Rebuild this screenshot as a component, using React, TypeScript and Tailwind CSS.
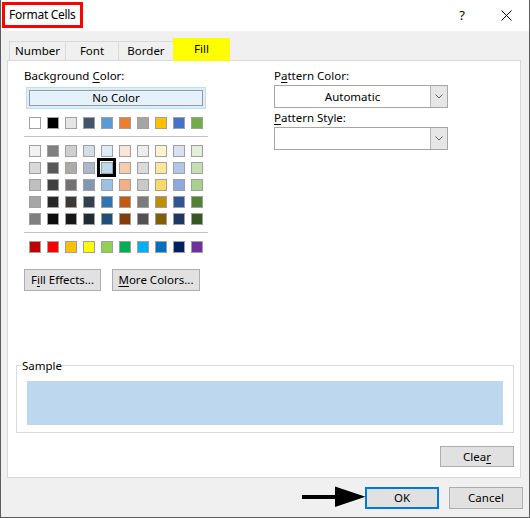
import React from "react";

const firstRow = ["#FFFFFF","#000000","#E7E6E6","#44546A","#5B9BD5","#ED7D31","#A5A5A5","#FFC000","#4472C4","#70AD47"];
const tints = [
  ["#F2F2F2","#7F7F7F","#D0CECE","#D6DCE4","#DDEBF7","#FCE4D6","#EDEDED","#FFF2CC","#D9E1F2","#E2EFDA"],
  ["#D9D9D9","#595959","#AEAAAA","#ADB9CA","#BDD7EE","#F8CBAD","#DBDBDB","#FFE699","#B4C6E7","#C6E0B4"],
  ["#BFBFBF","#404040","#767171","#8497B0","#9BC2E6","#F4B084","#C9C9C9","#FFD966","#8EA9DB","#A9D08E"],
  ["#A6A6A6","#262626","#3B3838","#333F4F","#2F75B5","#C65911","#7B7B7B","#BF8F00","#305496","#548235"],
  ["#808080","#0D0D0D","#181717","#222A35","#1F4E78","#833C0C","#525252","#806000","#203764","#375623"],
];
const standard = ["#C00000","#FF0000","#FFC000","#FFFF00","#92D050","#00B050","#00B0F0","#0070C0","#002060","#7030A0"];

function Swatch({ color, selected }: { color: string; selected?: boolean }) {
  return (
    <div className="relative w-[12px] h-[12px] shrink-0 border border-[#a0a0a0]" style={{ backgroundColor: color }}>
      {selected && (
        <div className="absolute left-[-5px] top-[-5px] w-[19px] h-[19px] border-[3px] border-black" />
      )}
    </div>
  );
}

function SwatchRow({ colors, sel }: { colors: string[]; sel?: number }) {
  return (
    <div className="flex gap-[6px] pl-[5px]">
      {colors.map((c, i) => (
        <Swatch key={i} color={c} selected={sel === i} />
      ))}
    </div>
  );
}

function Dropdown({ value }: { value?: string }) {
  return (
    <div className="flex h-[23px] w-[174px] border border-[#a6a6a6] bg-white">
      <div className="flex-1 flex items-center justify-center text-[11.5px] leading-[16px]">{value}</div>
      <div className="w-[17px] bg-[#e6e6e6] border-l border-[#b4b4b4] flex items-center justify-center">
        <svg width="8" height="5" viewBox="0 0 8 5">
          <path d="M0.5 0.5 L4 4 L7.5 0.5" fill="none" stroke="#606060" strokeWidth="1" />
        </svg>
      </div>
    </div>
  );
}

function Btn({ children, className }: { children: React.ReactNode; className: string }) {
  return (
    <div className={"flex items-center justify-center bg-[#e1e1e1] text-[11.5px] leading-[16px] " + className}>
      {children}
    </div>
  );
}

export default function App() {
  return (
    <div className="relative w-[530px] h-[518px] overflow-hidden bg-[#f0f0f0] border-l border-r border-b border-[#5c5c5c] flex flex-col font-['Noto_Sans','Segoe_UI',sans-serif] text-black">
      {/* Title bar */}
      <div className="h-[31px] shrink-0 bg-white flex items-start pt-[2px] pl-[1px]">
        <div className="w-[81px] h-[26px] border-[3px] border-[#ff0000] flex items-center pl-[4px] text-[12px] tracking-[-0.3px] leading-[16px] whitespace-nowrap">
          Format Cells
        </div>
        <div className="ml-auto flex items-center h-[26px] mr-[17px]">
          <span className="text-[13px] leading-[16px]">?</span>
          <svg className="ml-[36px]" width="11" height="11" viewBox="0 0 11 11">
            <path d="M0.5 0.5 L10.5 10.5 M10.5 0.5 L0.5 10.5" stroke="#000" strokeWidth="1" fill="none" />
          </svg>
        </div>
      </div>

      {/* Tabs */}
      <div className="h-[29px] shrink-0 flex items-end pl-[8px] relative z-10">
        <div className="w-[57px] h-[19px] border border-b-0 border-[#d9d9d9] flex items-center justify-center text-[11.5px] leading-[16px]">Number</div>
        <div className="w-[54px] h-[19px] -ml-px border border-b-0 border-[#d9d9d9] flex items-center justify-center text-[11.5px] leading-[16px]">Font</div>
        <div className="w-[56px] h-[19px] -ml-px border border-b-0 border-[#d9d9d9] flex items-center justify-center text-[11.5px] leading-[16px]">Border</div>
        <div className="w-[57px] h-[23px] -ml-px -mb-px bg-[#ffff00] flex items-center justify-center text-[11.5px] leading-[16px] pb-[1px]">Fill</div>
      </div>

      {/* Panel */}
      <div className="ml-[6px] w-[514px] h-[418px] shrink-0 bg-white border border-[#d9d9d9] flex flex-col pt-[7px]">
        <div className="flex pl-[16px]">
          {/* Left column */}
          <div className="w-[184px] flex flex-col">
            <div className="text-[11.5px] leading-[16px] whitespace-nowrap">
              Background <span className="underline underline-offset-2">C</span>olor:
            </div>
            <div className="mt-[3px] ml-[2px] w-[180px] h-[22px] border border-[#c3ddf4] bg-[#dcecfa] p-[2px]">
              <div className="w-full h-full border border-[#9a9a9a] bg-[#e5f1fb] flex items-center justify-center text-[11.5px] leading-[16px]">
                No Color
              </div>
            </div>
            <div className="mt-[8px]">
              <SwatchRow colors={firstRow} />
            </div>
            <div className="mt-[7px] h-px w-[184px] bg-[#c4c4c4]" />
            <div className="mt-[8px] flex flex-col gap-[5px]">
              {tints.map((row, i) => (
                <SwatchRow key={i} colors={row} sel={i === 1 ? 4 : undefined} />
              ))}
            </div>
            <div className="mt-[7px] h-px w-[184px] bg-[#c4c4c4]" />
            <div className="mt-[8px]">
              <SwatchRow colors={standard} />
            </div>
            <div className="mt-[16px] flex gap-[11px]">
              <Btn className="w-[77px] h-[22px] border border-[#adadad]">
                <span>F<span className="underline underline-offset-2">i</span>ll Effects...</span>
              </Btn>
              <Btn className="w-[88px] h-[22px] border border-[#adadad]">
                <span><span className="underline underline-offset-2">M</span>ore Colors...</span>
              </Btn>
            </div>
          </div>

          {/* Right column */}
          <div className="ml-[66px] flex flex-col">
            <div className="text-[11.5px] leading-[16px] whitespace-nowrap">
              P<span className="underline underline-offset-2">a</span>ttern Color:
            </div>
            <div className="mt-[1px]">
              <Dropdown value="Automatic" />
            </div>
            <div className="mt-[2px] text-[11.5px] leading-[16px] whitespace-nowrap">
              <span className="underline underline-offset-2">P</span>attern Style:
            </div>
            <div className="mt-[1px]">
              <Dropdown />
            </div>
          </div>
        </div>

        {/* Sample */}
        <div className="relative ml-[8px] mr-[6px] mt-[74px] border border-[#dadada] pt-[15px] pl-[10px] pr-[10px] pb-[7px]">
          <span className="absolute left-[5px] top-[-8px] bg-white text-[11.5px] leading-[16px]">Sample</span>
          <div className="h-[44px] bg-[#bdd7ee]" />
        </div>

        <div className="self-end mr-[6px] mt-[13px]">
          <Btn className="w-[74px] h-[21px] border border-[#adadad]">
            <span>Clea<span className="underline underline-offset-2">r</span></span>
          </Btn>
        </div>
      </div>

      {/* Bottom buttons */}
      <div className="mt-[9px] flex justify-end gap-[10px] pr-[6px]">
        <Btn className="w-[74px] h-[22px] border-2 border-[#0078d7]">OK</Btn>
        <Btn className="w-[74px] h-[22px] border border-[#adadad]">Cancel</Btn>
      </div>

      {/* Annotation arrow */}
      <svg className="absolute left-[300px] top-[486px]" width="65" height="22" viewBox="0 0 65 22">
        <rect x="1" y="9" width="35" height="4" fill="#000" />
        <path d="M34 0.5 L64.5 10.8 L34 21 Z" fill="#000" />
      </svg>
    </div>
  );
}
